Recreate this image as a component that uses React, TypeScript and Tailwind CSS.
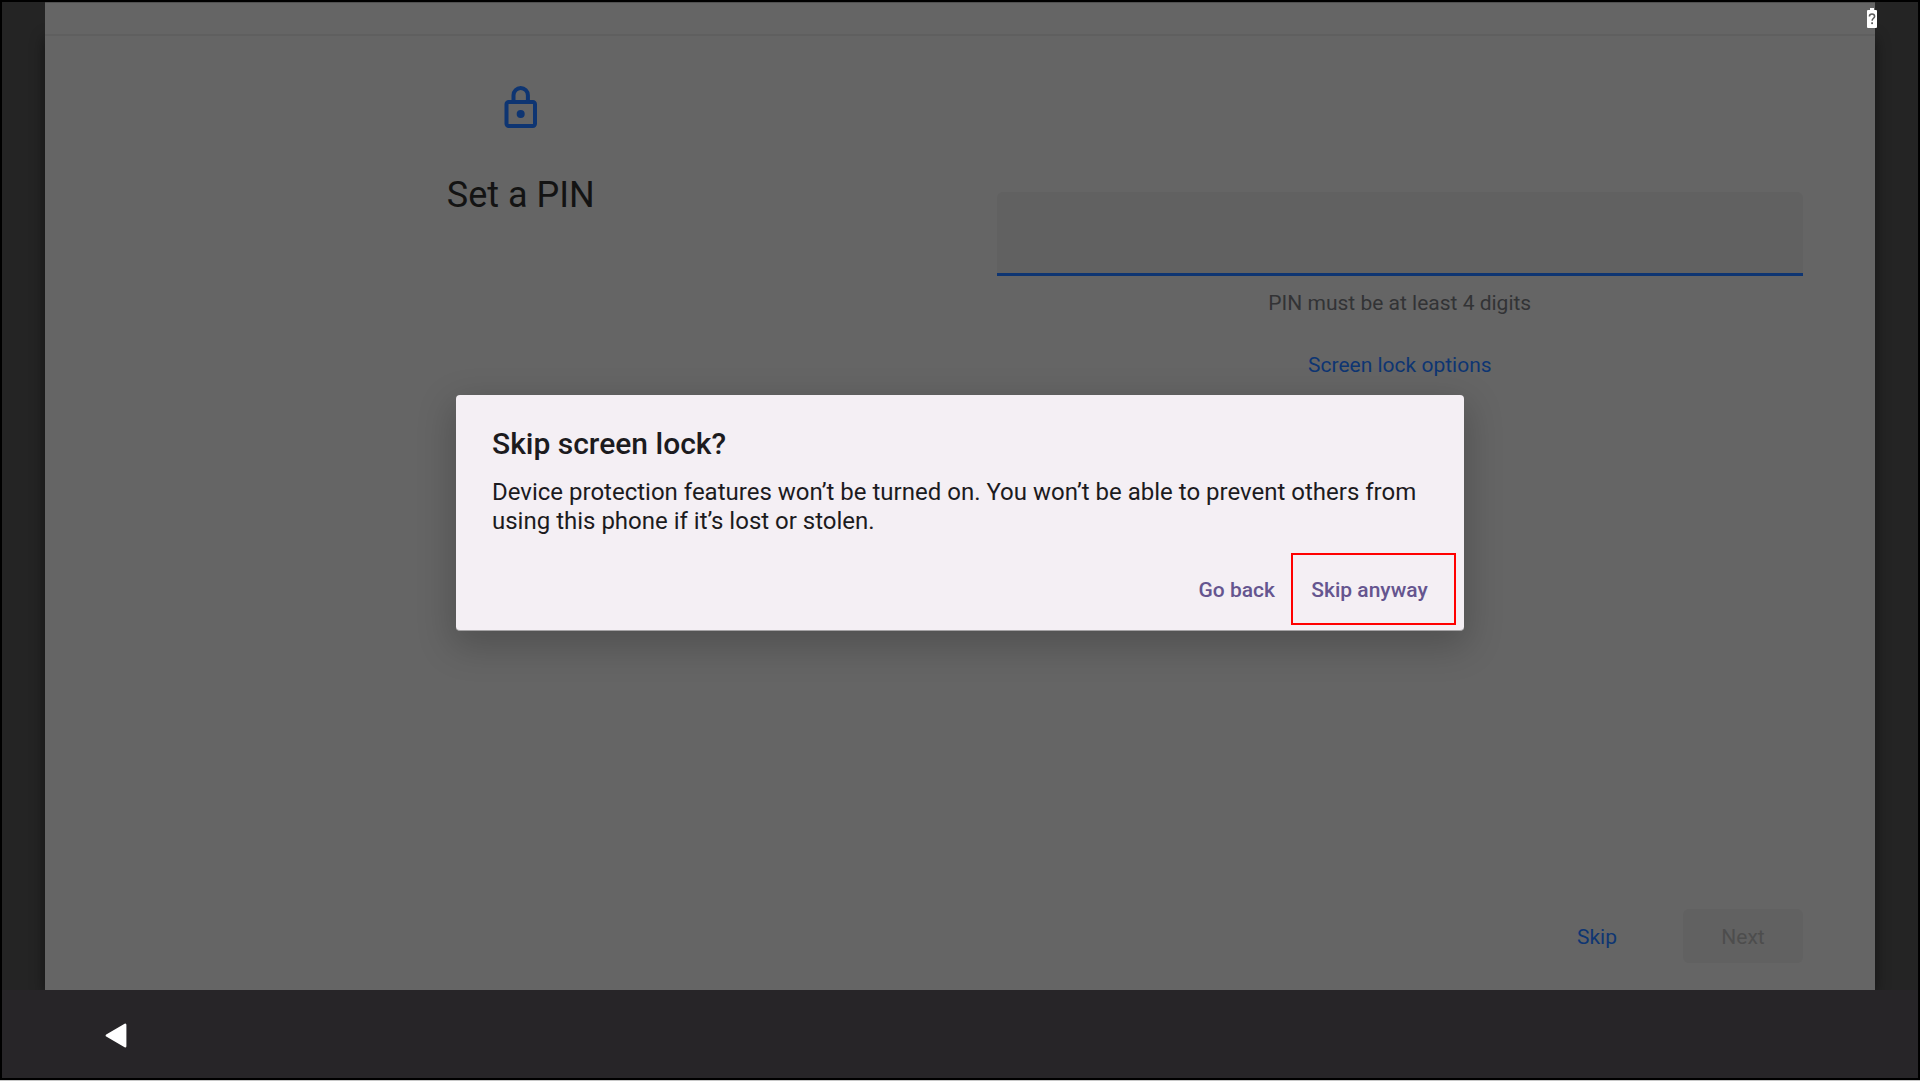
import React, { useState } from 'react';

const LockIcon: React.FC = () => (
  <svg className="h-12 w-12" viewBox="0 0 48 48" fill="none" aria-hidden="true">
    <rect x="9.5" y="19" width="28.5" height="24" rx="2.2" stroke="#0e3572" strokeWidth="4" />
    <path d="M16.5 19v-6.8a7.2 7.2 0 0 1 14.4 0V19" stroke="#0e3572" strokeWidth="4" />
    <circle cx="23.7" cy="31" r="4" fill="#0e3572" />
  </svg>
);

const BatteryUnknownIcon: React.FC = () => (
  <svg className="h-5 w-[10px]" viewBox="0 0 10 20" fill="none" role="img" aria-label="Battery unknown">
    <path d="M3 0h4v2h2a1 1 0 0 1 1 1v16a1 1 0 0 1-1 1H1a1 1 0 0 1-1-1V3a1 1 0 0 1 1-1h2z" fill="#ffffff" />
    <path
      d="M2.4 8.6C2.4 7 3.5 6.1 5 6.1s2.6.9 2.6 2.3c0 1.9-2.5 2-2.5 4.4"
      stroke="#5c5c5c"
      strokeWidth="1.5"
    />
    <rect x="4.2" y="14.3" width="1.8" height="1.8" fill="#5c5c5c" />
  </svg>
);

const BackIcon: React.FC = () => (
  <svg className="h-[25px] w-[22px]" viewBox="0 0 22 25" aria-hidden="true">
    <path
      d="M1.8 12.5 20.2 1.8v21.4z"
      fill="#ffffff"
      stroke="#ffffff"
      strokeWidth="2.4"
      strokeLinejoin="round"
    />
  </svg>
);

const SkipDialog: React.FC = () => (
  <div
    role="dialog"
    aria-labelledby="skip-title"
    aria-describedby="skip-message"
    className="w-full max-w-[1008px] rounded-[4px] border-b border-[#a5a3a5] bg-[#f4eff4] shadow-[0_12px_36px_4px_rgba(0,0,0,0.2)]"
  >
    <div className="px-9 pt-[31px]">
      <h2 id="skip-title" className="text-[30px] leading-9 font-medium text-[#1c1b1e]">
        Skip screen lock?
      </h2>
      <p id="skip-message" className="mt-4 text-[24px] leading-[29px] text-[#1c1b1e]">
        Device protection features won’t be turned on. You won’t be able to prevent others from
        using this phone if it’s lost or stolen.
      </p>
    </div>
    <div className="mt-[17px] flex items-center justify-end pr-2 pb-[5px] text-[21px] font-medium text-[#65558f]">
      <button type="button" className="h-[72px] px-4 pt-1">
        Go back
      </button>
      <button type="button" className="h-[72px] w-[165px] border-2 border-[#ff0000] pt-1 pr-2">
        Skip anyway
      </button>
    </div>
  </div>
);

const App: React.FC = () => {
  const [pin, setPin] = useState('');

  return (
    <div className="bg-[#c8c8c8] pb-px font-[Roboto,sans-serif]">
      <div className="flex min-h-[calc(100vh-1px)] flex-col border-2 border-black bg-[#242424]">
        <div className="relative flex flex-1 flex-col px-[43px]">
          <header className="relative z-10 flex h-8 items-start justify-end border-t border-[#505050] bg-[#656565]">
            <div className="-mr-[2px] pt-[5px]">
              <BatteryUnknownIcon />
            </div>
          </header>

          <main className="flex flex-1 flex-col border-t-2 border-[#5f5f5f] bg-[#656565] shadow-[0_4px_14px_rgba(0,0,0,0.45)]">
            <div className="grid flex-1 grid-cols-[13fr_12fr]">
              <section className="flex flex-col items-center pt-[47px]">
                <LockIcon />
                <h1 className="mt-10 text-[36px] leading-[48px] text-[#131313]">Set a PIN</h1>
              </section>

              <section className="flex flex-col items-center pt-[156px] pr-[72px]">
                <input
                  type="password"
                  inputMode="numeric"
                  aria-label="PIN"
                  aria-describedby="pin-hint"
                  value={pin}
                  onChange={(e) => setPin(e.target.value)}
                  className="h-[84px] w-full rounded-t-[6px] border-b-[3px] border-[#0e3572] bg-[#616161] px-6 text-[24px] outline-none"
                />
                <p id="pin-hint" className="mt-[15px] text-[21px] leading-6 text-[#323335]">
                  PIN must be at least 4 digits
                </p>
                <button type="button" className="mt-[38px] text-[21px] leading-6 text-[#0e3572]">
                  Screen lock options
                </button>
              </section>
            </div>

            <footer className="flex items-center justify-end gap-[66px] pr-[72px] pb-[27px] text-[21px]">
              <button type="button" className="h-[54px] pt-1 text-[#0e3572]">
                Skip
              </button>
              <button
                type="button"
                disabled
                className="h-[54px] w-[120px] rounded-[6px] bg-[#616161] pt-1 text-[#4d4d4d]"
              >
                Next
              </button>
            </footer>
          </main>

          <div className="absolute inset-x-0 top-[34px] bottom-0 z-20 flex items-center justify-center">
            <SkipDialog />
          </div>
        </div>

        <nav className="relative z-10 flex h-[88px] items-center bg-[#272528] pt-[2px] pl-[103px]">
          <button type="button" aria-label="Back">
            <BackIcon />
          </button>
        </nav>
      </div>
    </div>
  );
};

export default App;
